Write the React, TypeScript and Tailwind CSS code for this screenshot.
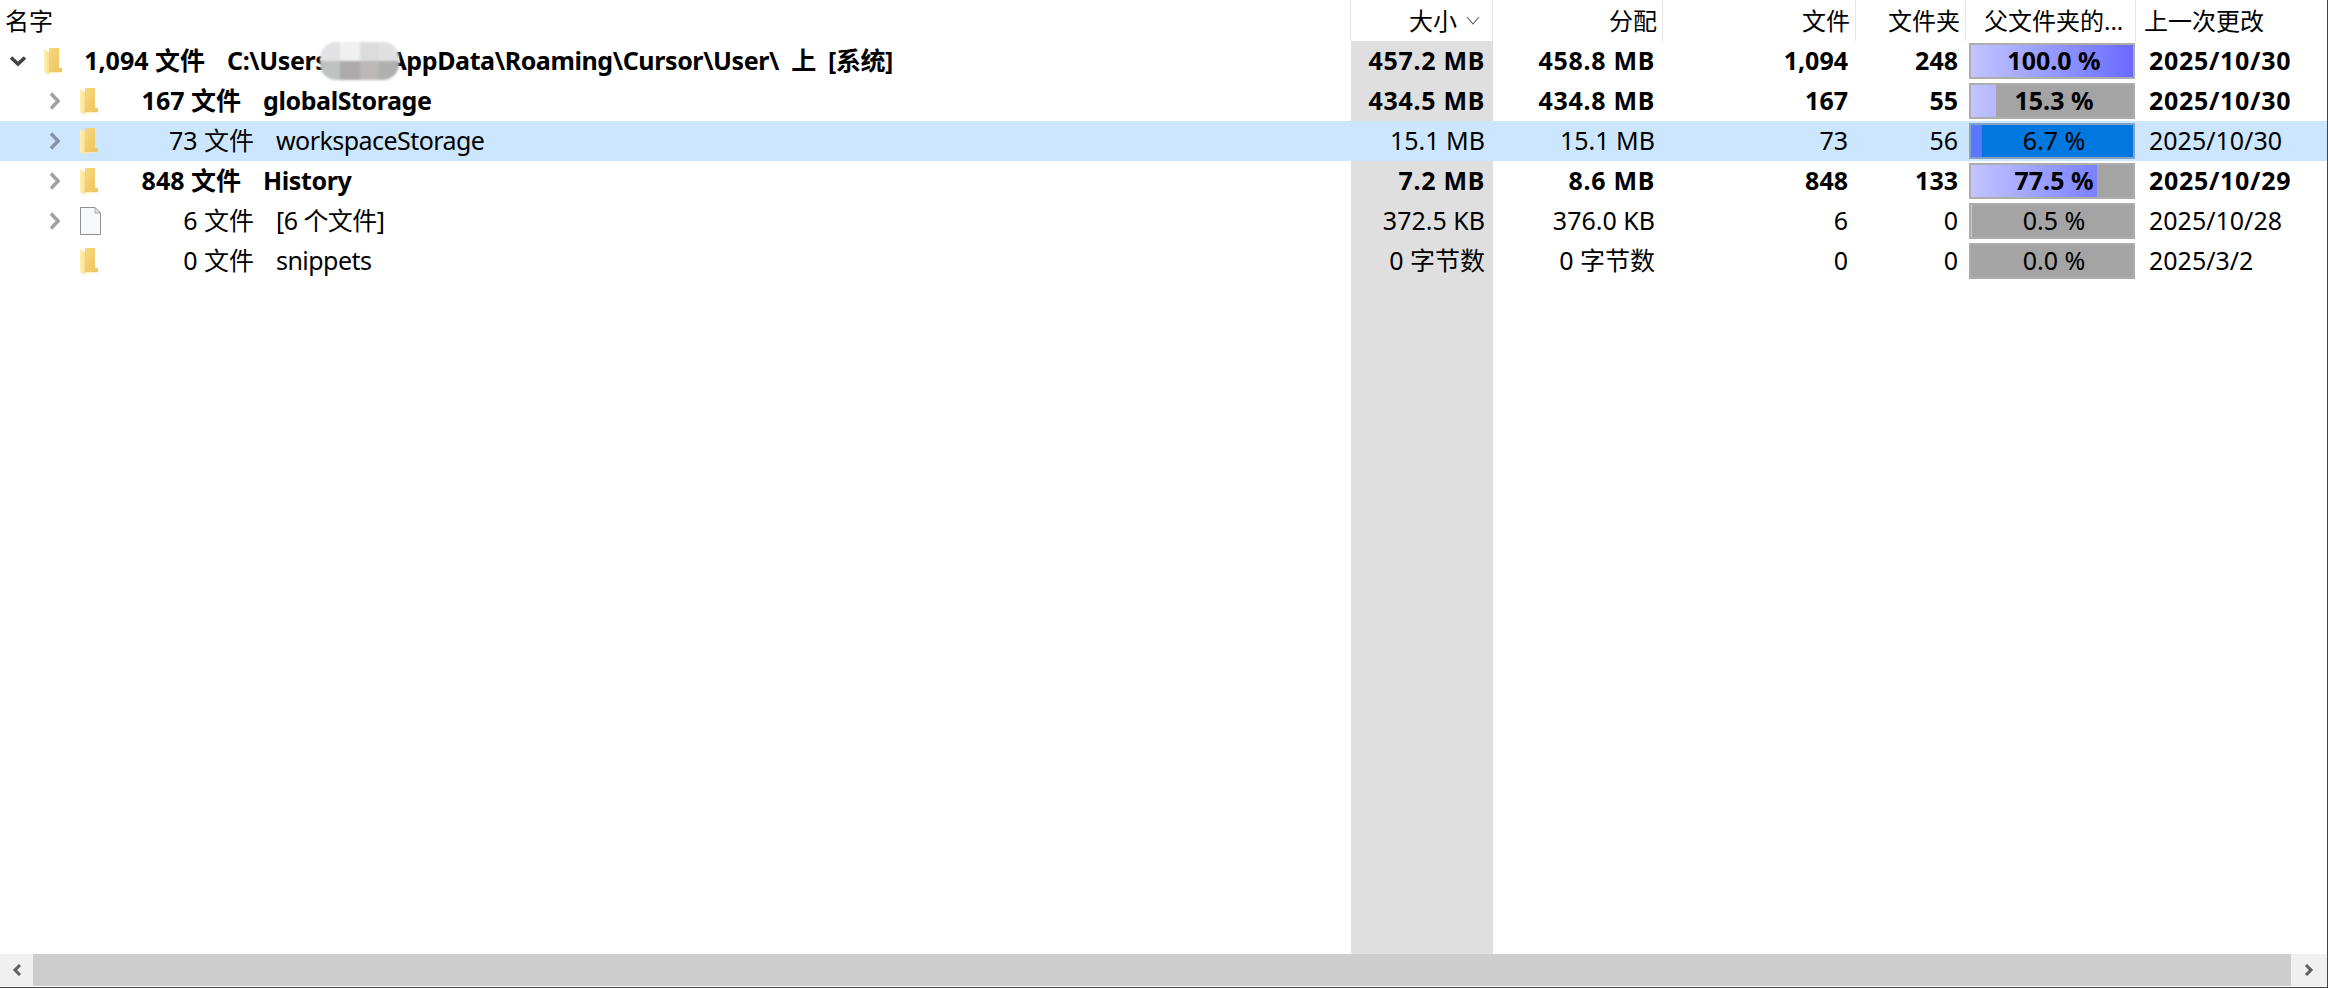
type Row = {
  kind: 'folder' | 'file';
  chevron: 'open' | 'closed' | 'none';
  bold: boolean;
  selected?: boolean;
  indent: string;
  countBox: string;
  count: string;
  name: string;
  size: string;
  alloc: string;
  files: string;
  folders: string;
  pct: number;
  date: string;
};

const ROWS: Row[] = [
  { kind: 'folder', chevron: 'open', bold: true, indent: 'pl-[5px]', countBox: 'w-[143px]', count: '1,094 文件', name: 'C:\\Users\\xxx\\AppData\\Roaming\\Cursor\\User\\  上  [系统]', size: '457.2 MB', alloc: '458.8 MB', files: '1,094', folders: '248', pct: 100, date: '2025/10/30' },
  { kind: 'folder', chevron: 'closed', bold: true, indent: 'pl-[41px]', countBox: 'w-[143px]', count: '167 文件', name: 'globalStorage', size: '434.5 MB', alloc: '434.8 MB', files: '167', folders: '55', pct: 15.3, date: '2025/10/30' },
  { kind: 'folder', chevron: 'closed', bold: false, selected: true, indent: 'pl-[41px]', countBox: 'w-[156px]', count: '73 文件', name: 'workspaceStorage', size: '15.1 MB', alloc: '15.1 MB', files: '73', folders: '56', pct: 6.7, date: '2025/10/30' },
  { kind: 'folder', chevron: 'closed', bold: true, indent: 'pl-[41px]', countBox: 'w-[143px]', count: '848 文件', name: 'History', size: '7.2 MB', alloc: '8.6 MB', files: '848', folders: '133', pct: 77.5, date: '2025/10/29' },
  { kind: 'file', chevron: 'closed', bold: false, indent: 'pl-[41px]', countBox: 'w-[156px]', count: '6 文件', name: '[6 个文件]', size: '372.5 KB', alloc: '376.0 KB', files: '6', folders: '0', pct: 0.5, date: '2025/10/28' },
  { kind: 'folder', chevron: 'none', bold: false, indent: 'pl-[41px]', countBox: 'w-[156px]', count: '0 文件', name: 'snippets', size: '0 字节数', alloc: '0 字节数', files: '0', folders: '0', pct: 0, date: '2025/3/2' },
];

const COLS = 'grid grid-cols-[1351px_142px_170px_193px_110px_170px_191px]';

function FolderIcon() {
  return (
    <svg width="18" height="27" viewBox="0 0 18 27" className="shrink-0">
      <defs>
        <linearGradient id="folderBack" x1="0" y1="0" x2="1" y2="1">
          <stop offset="0" stopColor="#f6d67e" />
          <stop offset="1" stopColor="#eec45c" />
        </linearGradient>
        <linearGradient id="folderFront" x1="0" y1="0" x2="1" y2="0">
          <stop offset="0" stopColor="#fff0b4" />
          <stop offset="1" stopColor="#fbdf90" />
        </linearGradient>
      </defs>
      <path d="M5 0H15V20H18V24H5Z" fill="url(#folderBack)" />
      <path d="M0 1L5 4V27L0 24Z" fill="url(#folderFront)" />
      <path d="M5 24H18V24.6L5 25Z" fill="#fbe7a8" />
    </svg>
  );
}

function FileIcon() {
  return (
    <svg width="21" height="28" viewBox="0 0 21 28" className="shrink-0">
      <path d="M.5.5H15L20.5 6V27.5H.5Z" fill="#f6f8fa" stroke="#8f8f8f" />
      <path d="M15 .5V6H20.5Z" fill="#e4e4e4" stroke="#a8a8a8" />
    </svg>
  );
}

function TreeChevron({ open, className }: { open?: boolean; className: string }) {
  return open ? (
    <svg width="18" height="12" viewBox="0 0 18 12" className={className}>
      <path d="M2 2.5L9 9L16 2.5" fill="none" stroke="currentColor" strokeWidth="3.6" />
    </svg>
  ) : (
    <svg width="12" height="18" viewBox="0 0 12 18" className={className}>
      <path d="M2 1.5L9 9L2 16.5" fill="none" stroke="currentColor" strokeWidth="3.6" />
    </svg>
  );
}

function ScrollArrow({ left }: { left?: boolean }) {
  return (
    <svg width="10" height="12" viewBox="0 0 10 12" className="text-[#606060]">
      <path d={left ? 'M8 1L3 6L8 11' : 'M2 1L7 6L2 11'} fill="none" stroke="currentColor" strokeWidth="3" />
    </svg>
  );
}

function PctBar({ pct, selected }: { pct: number; selected?: boolean }) {
  const label = pct.toFixed(1) + ' %';
  return (
    <div className={`relative ml-[3px] h-9 w-[166px] border-[2px] ${selected ? 'border-[#83a3c5] bg-[#0078e0]' : 'border-[#adadad] bg-[#a4a4a4]'}`}>
      <div className="h-full overflow-hidden" style={{ width: pct + '%' }}>
        <div className={`h-full w-[162px] ${selected ? 'bg-[#5a78ff]' : 'bg-gradient-to-r from-[#c4c4ff] to-[#6a6aff]'}`} />
      </div>
      <div className="absolute inset-0 flex items-center justify-center pl-[4px]">{label}</div>
    </div>
  );
}

function TreeRow({ row }: { row: Row }) {
  // bold figures run a little wider than the font gives, names a little narrower
  const figures = row.bold ? 'tracking-[0.7px]' : '';
  return (
    <div className={`${COLS} h-10 items-center ${row.bold ? 'font-bold' : ''} ${row.selected ? 'bg-[#cde6ff]' : ''}`}>
      <div className={`flex min-w-0 items-center whitespace-pre ${row.indent}`}>
        <div className="flex w-[39px] shrink-0 items-center">
          {row.chevron === 'open' && <TreeChevron open className="ml-1 text-[#444444]" />}
          {row.chevron === 'closed' && <TreeChevron className={`ml-2 ${row.selected ? 'text-[#8694a4]' : 'text-[#a2a2a2]'}`} />}
        </div>
        {row.kind === 'folder' ? <FolderIcon /> : <FileIcon />}
        <div className={`shrink-0 text-right ${row.kind === 'file' ? '-ml-[3px]' : ''} ${row.countBox}`}>{row.count}</div>
        <div className={`ml-[22px] ${row.bold ? 'tracking-[-0.4px]' : 'tracking-[-0.55px]'}`}>{row.name}</div>
      </div>
      <div className={`pr-2 text-right ${figures}`}>{row.size}</div>
      <div className={`pr-2 text-right ${figures}`}>{row.alloc}</div>
      <div className="pr-2 text-right">{row.files}</div>
      <div className="pr-2 text-right">{row.folders}</div>
      <PctBar pct={row.pct} selected={row.selected} />
      <div className={`pl-[13px] ${figures}`}>{row.date}</div>
    </div>
  );
}

export default function App() {
  return (
    <div className="flex h-[988px] w-[2328px] flex-col overflow-hidden border-r border-b border-[#444444] bg-white text-[25px] text-black [font-family:'Noto_Sans','Noto_Sans_CJK_SC',sans-serif]">
      <div className={`${COLS} h-[41px] shrink-0 items-center text-[24px]`}>
        <div className="border-r border-[#e5e5e5] pl-[5px] leading-[41px]">名字</div>
        <div className="flex items-center justify-end gap-[9px] border-r border-[#e5e5e5] pr-3 leading-[41px]">
          大小
          <svg width="14" height="9" viewBox="0 0 14 9" className="text-[#555555]">
            <path d="M1 1L7 8L13 1" fill="none" stroke="currentColor" strokeWidth="1.1" />
          </svg>
        </div>
        <div className="border-r border-[#e5e5e5] pr-[5px] text-right leading-[41px]">分配</div>
        <div className="border-r border-[#e5e5e5] pr-[5px] text-right leading-[41px]">文件</div>
        <div className="border-r border-[#e5e5e5] pr-[5px] text-right leading-[41px]">文件夹</div>
        <div className="border-r border-[#e5e5e5] pl-[18px] leading-[41px] whitespace-nowrap">父文件夹的...</div>
        <div className="pl-2 leading-[41px]">上一次更改</div>
      </div>

      <div className="relative min-h-0 flex-1 bg-[linear-gradient(to_right,transparent_1351px,#dfdfdf_1351px,#dfdfdf_1493px,transparent_1493px)]">
        {ROWS.map(r => <TreeRow key={r.count} row={r} />)}
        {/* mosaic hiding the user name */}
        <div className="absolute left-[320px] top-[1px] grid h-[38px] w-[79px] grid-cols-4 grid-rows-2 overflow-hidden rounded-[16px] blur-[1px]">
          <div className="bg-[#e2e2e4]" />
          <div className="bg-[#f0f0f0]" />
          <div className="bg-[#dcdcdc]" />
          <div className="bg-[#e0e0e0]" />
          <div className="bg-[#c0c2c2]" />
          <div className="bg-[#acaaaa]" />
          <div className="bg-[#bcb8b8]" />
          <div className="bg-[#b0b0b0]" />
        </div>
      </div>

      <div className="mb-px flex h-8 shrink-0 items-stretch">
        <div className="flex w-[33px] items-center justify-center bg-[#f0f0f0]">
          <ScrollArrow left />
        </div>
        <div className="flex-1 bg-[#cdcdcd]" />
        <div className="flex w-9 items-center justify-center bg-[#f0f0f0]">
          <ScrollArrow />
        </div>
      </div>
    </div>
  );
}
